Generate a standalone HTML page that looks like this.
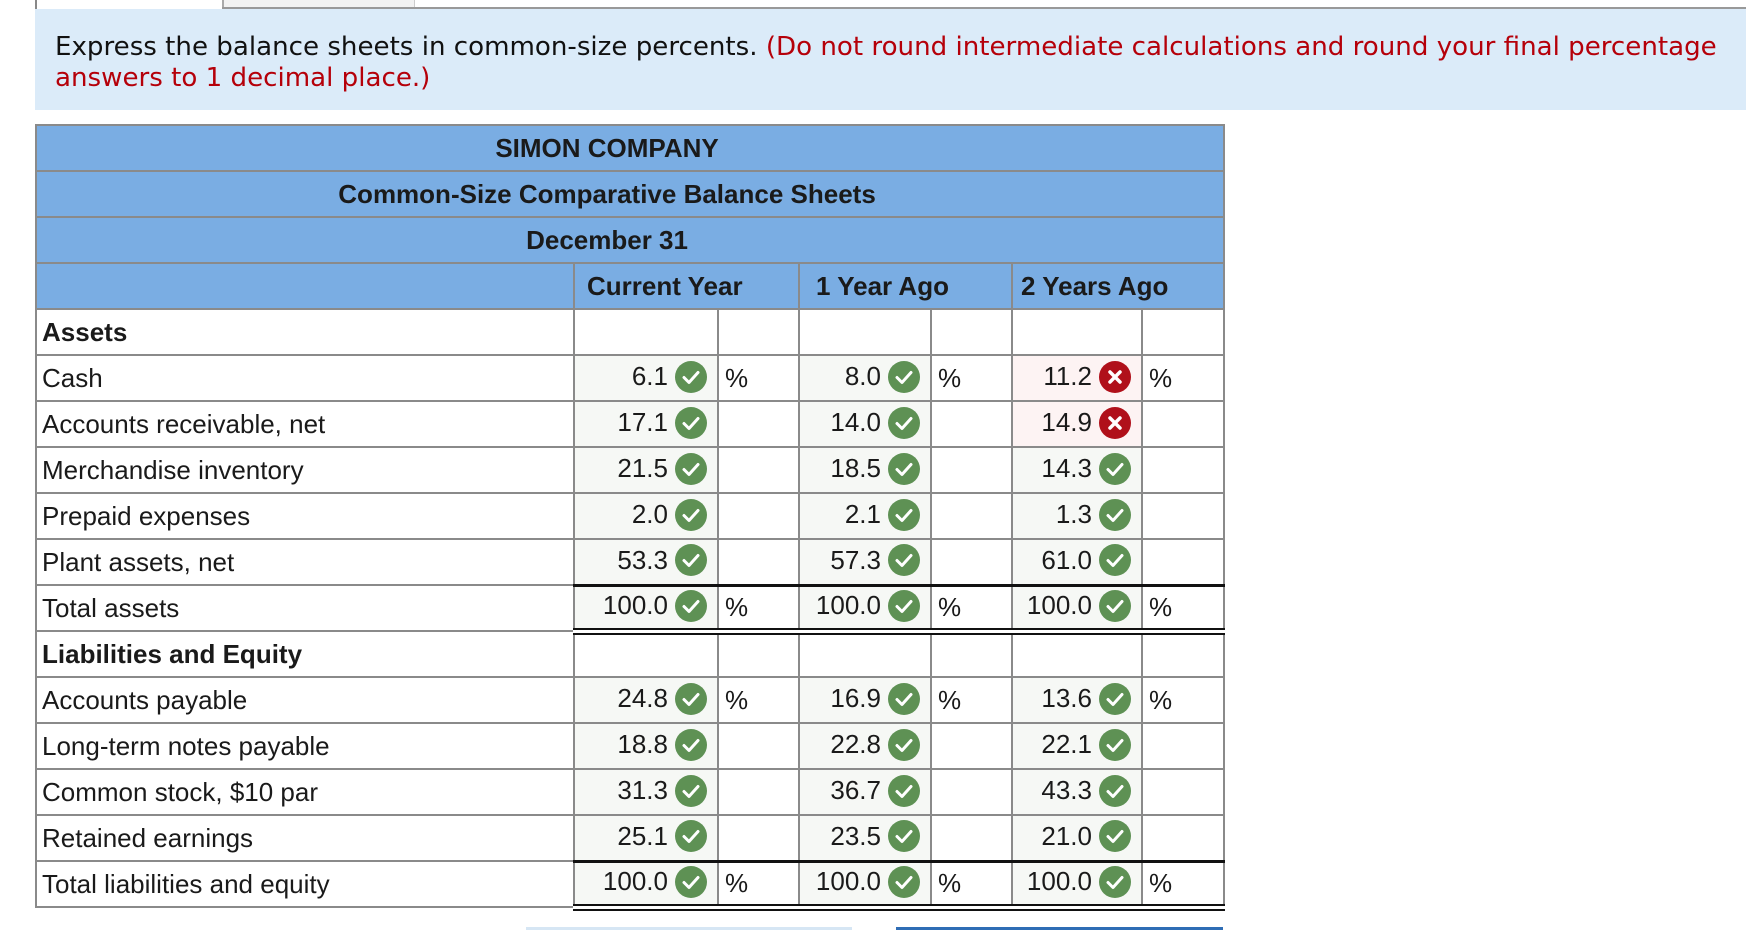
<!DOCTYPE html>
<html><head><meta charset="utf-8"><style>
html,body{margin:0;padding:0;background:#fff;width:1746px;height:930px;overflow:hidden;position:relative}
.tabl{position:absolute;left:35px;top:0;width:2px;height:9px;background:#888}
.tab{position:absolute;left:222px;top:0;width:190px;height:8px;border-left:2px solid #aaa;border-right:1px solid #ccc;background:#f2f2f2}
.tabline{position:absolute;left:222px;top:7px;right:0;height:2px;background:#999}
.instr{position:absolute;left:35px;top:9px;width:1711px;height:101px;background:#dbebf9;font-family:"DejaVu Sans",Verdana,sans-serif;font-size:26.1px;line-height:31px;color:#111;box-sizing:border-box;padding:23px 0 0 20px;white-space:nowrap}
.red{color:#b5000a}
table{position:absolute;left:35px;top:124px;border-collapse:collapse;table-layout:fixed;width:1188px;font-family:"Liberation Sans",Arial,sans-serif;font-size:26px;color:#1a1a1a}
td{border:2px solid #8a8a8a;height:42px;padding:0;box-sizing:border-box;white-space:nowrap;overflow:hidden}
tr{height:46px}
.h td{background:#7aade3;font-weight:bold;text-align:center}
.h td.c{padding-right:46px}
.h td.l{text-align:left;padding-left:12px}
.lab{padding-left:5px}
.b{font-weight:bold}
.v{background:#f6f8f5;text-align:right;padding-right:10px}
.x{background:#fdf3f3}
.p{padding-left:6px}
.ic{display:inline-block;width:32px;height:32px;border-radius:50%;background:#5e9154;vertical-align:middle;margin-left:7px;position:relative;top:-2px}
.ic svg{position:absolute;left:0;top:0}
.ic.r{background:#b0101a}
.t td.tv{border-top:3px solid #111;border-bottom:7px double #111}
.btn1{position:absolute;left:526px;top:927px;width:326px;height:3px;background:#d6e6f4}
.btn2{position:absolute;left:896px;top:927px;width:327px;height:3px;background:#2f6db5}
</style></head><body>
<div class="tabl"></div><div class="tab"></div><div class="tabline"></div>
<div class="instr">Express the balance sheets in common-size percents. <span class="red">(Do not round intermediate calculations and round your final percentage<br>answers to 1 decimal place.)</span></div>
<table>
<colgroup><col style="width:538px"><col style="width:144px"><col style="width:81px"><col style="width:132px"><col style="width:81px"><col style="width:130px"><col style="width:82px"></colgroup>
<tr class="h"><td colspan="7" class="c">SIMON COMPANY</td></tr>
<tr class="h"><td colspan="7" class="c">Common-Size Comparative Balance Sheets</td></tr>
<tr class="h"><td colspan="7" class="c">December 31</td></tr>
<tr class="h"><td></td><td colspan="2" class="l">Current Year</td><td colspan="2" class="l" style="padding-left:16px">1 Year Ago</td><td colspan="2" class="l" style="padding-left:8px">2 Years Ago</td></tr>
<tr><td class="lab b">Assets</td><td></td><td></td><td></td><td></td><td></td><td></td></tr>
<tr><td class="lab">Cash</td><td class="v">6.1<span class="ic"><svg width="32" height="32"><path d="M9 16.5l5 5 9-10" fill="none" stroke="#fff" stroke-width="3" stroke-linecap="round" stroke-linejoin="round"/></svg></span></td><td class="p">%</td><td class="v">8.0<span class="ic"><svg width="32" height="32"><path d="M9 16.5l5 5 9-10" fill="none" stroke="#fff" stroke-width="3" stroke-linecap="round" stroke-linejoin="round"/></svg></span></td><td class="p">%</td><td class="v x">11.2<span class="ic r"><svg width="32" height="32"><path d="M11 11l10 10M21 11l-10 10" fill="none" stroke="#fff" stroke-width="3.5" stroke-linecap="round"/></svg></span></td><td class="p">%</td></tr>
<tr><td class="lab">Accounts receivable, net</td><td class="v">17.1<span class="ic"><svg width="32" height="32"><path d="M9 16.5l5 5 9-10" fill="none" stroke="#fff" stroke-width="3" stroke-linecap="round" stroke-linejoin="round"/></svg></span></td><td></td><td class="v">14.0<span class="ic"><svg width="32" height="32"><path d="M9 16.5l5 5 9-10" fill="none" stroke="#fff" stroke-width="3" stroke-linecap="round" stroke-linejoin="round"/></svg></span></td><td></td><td class="v x">14.9<span class="ic r"><svg width="32" height="32"><path d="M11 11l10 10M21 11l-10 10" fill="none" stroke="#fff" stroke-width="3.5" stroke-linecap="round"/></svg></span></td><td></td></tr>
<tr><td class="lab">Merchandise inventory</td><td class="v">21.5<span class="ic"><svg width="32" height="32"><path d="M9 16.5l5 5 9-10" fill="none" stroke="#fff" stroke-width="3" stroke-linecap="round" stroke-linejoin="round"/></svg></span></td><td></td><td class="v">18.5<span class="ic"><svg width="32" height="32"><path d="M9 16.5l5 5 9-10" fill="none" stroke="#fff" stroke-width="3" stroke-linecap="round" stroke-linejoin="round"/></svg></span></td><td></td><td class="v">14.3<span class="ic"><svg width="32" height="32"><path d="M9 16.5l5 5 9-10" fill="none" stroke="#fff" stroke-width="3" stroke-linecap="round" stroke-linejoin="round"/></svg></span></td><td></td></tr>
<tr><td class="lab">Prepaid expenses</td><td class="v">2.0<span class="ic"><svg width="32" height="32"><path d="M9 16.5l5 5 9-10" fill="none" stroke="#fff" stroke-width="3" stroke-linecap="round" stroke-linejoin="round"/></svg></span></td><td></td><td class="v">2.1<span class="ic"><svg width="32" height="32"><path d="M9 16.5l5 5 9-10" fill="none" stroke="#fff" stroke-width="3" stroke-linecap="round" stroke-linejoin="round"/></svg></span></td><td></td><td class="v">1.3<span class="ic"><svg width="32" height="32"><path d="M9 16.5l5 5 9-10" fill="none" stroke="#fff" stroke-width="3" stroke-linecap="round" stroke-linejoin="round"/></svg></span></td><td></td></tr>
<tr><td class="lab">Plant assets, net</td><td class="v">53.3<span class="ic"><svg width="32" height="32"><path d="M9 16.5l5 5 9-10" fill="none" stroke="#fff" stroke-width="3" stroke-linecap="round" stroke-linejoin="round"/></svg></span></td><td></td><td class="v">57.3<span class="ic"><svg width="32" height="32"><path d="M9 16.5l5 5 9-10" fill="none" stroke="#fff" stroke-width="3" stroke-linecap="round" stroke-linejoin="round"/></svg></span></td><td></td><td class="v">61.0<span class="ic"><svg width="32" height="32"><path d="M9 16.5l5 5 9-10" fill="none" stroke="#fff" stroke-width="3" stroke-linecap="round" stroke-linejoin="round"/></svg></span></td><td></td></tr>
<tr class="t"><td class="lab">Total assets</td><td class="v tv">100.0<span class="ic"><svg width="32" height="32"><path d="M9 16.5l5 5 9-10" fill="none" stroke="#fff" stroke-width="3" stroke-linecap="round" stroke-linejoin="round"/></svg></span></td><td class="p tv">%</td><td class="v tv">100.0<span class="ic"><svg width="32" height="32"><path d="M9 16.5l5 5 9-10" fill="none" stroke="#fff" stroke-width="3" stroke-linecap="round" stroke-linejoin="round"/></svg></span></td><td class="p tv">%</td><td class="v tv">100.0<span class="ic"><svg width="32" height="32"><path d="M9 16.5l5 5 9-10" fill="none" stroke="#fff" stroke-width="3" stroke-linecap="round" stroke-linejoin="round"/></svg></span></td><td class="p tv">%</td></tr>
<tr><td class="lab b">Liabilities and Equity</td><td></td><td></td><td></td><td></td><td></td><td></td></tr>
<tr><td class="lab">Accounts payable</td><td class="v">24.8<span class="ic"><svg width="32" height="32"><path d="M9 16.5l5 5 9-10" fill="none" stroke="#fff" stroke-width="3" stroke-linecap="round" stroke-linejoin="round"/></svg></span></td><td class="p">%</td><td class="v">16.9<span class="ic"><svg width="32" height="32"><path d="M9 16.5l5 5 9-10" fill="none" stroke="#fff" stroke-width="3" stroke-linecap="round" stroke-linejoin="round"/></svg></span></td><td class="p">%</td><td class="v">13.6<span class="ic"><svg width="32" height="32"><path d="M9 16.5l5 5 9-10" fill="none" stroke="#fff" stroke-width="3" stroke-linecap="round" stroke-linejoin="round"/></svg></span></td><td class="p">%</td></tr>
<tr><td class="lab">Long-term notes payable</td><td class="v">18.8<span class="ic"><svg width="32" height="32"><path d="M9 16.5l5 5 9-10" fill="none" stroke="#fff" stroke-width="3" stroke-linecap="round" stroke-linejoin="round"/></svg></span></td><td></td><td class="v">22.8<span class="ic"><svg width="32" height="32"><path d="M9 16.5l5 5 9-10" fill="none" stroke="#fff" stroke-width="3" stroke-linecap="round" stroke-linejoin="round"/></svg></span></td><td></td><td class="v">22.1<span class="ic"><svg width="32" height="32"><path d="M9 16.5l5 5 9-10" fill="none" stroke="#fff" stroke-width="3" stroke-linecap="round" stroke-linejoin="round"/></svg></span></td><td></td></tr>
<tr><td class="lab">Common stock, $10 par</td><td class="v">31.3<span class="ic"><svg width="32" height="32"><path d="M9 16.5l5 5 9-10" fill="none" stroke="#fff" stroke-width="3" stroke-linecap="round" stroke-linejoin="round"/></svg></span></td><td></td><td class="v">36.7<span class="ic"><svg width="32" height="32"><path d="M9 16.5l5 5 9-10" fill="none" stroke="#fff" stroke-width="3" stroke-linecap="round" stroke-linejoin="round"/></svg></span></td><td></td><td class="v">43.3<span class="ic"><svg width="32" height="32"><path d="M9 16.5l5 5 9-10" fill="none" stroke="#fff" stroke-width="3" stroke-linecap="round" stroke-linejoin="round"/></svg></span></td><td></td></tr>
<tr><td class="lab">Retained earnings</td><td class="v">25.1<span class="ic"><svg width="32" height="32"><path d="M9 16.5l5 5 9-10" fill="none" stroke="#fff" stroke-width="3" stroke-linecap="round" stroke-linejoin="round"/></svg></span></td><td></td><td class="v">23.5<span class="ic"><svg width="32" height="32"><path d="M9 16.5l5 5 9-10" fill="none" stroke="#fff" stroke-width="3" stroke-linecap="round" stroke-linejoin="round"/></svg></span></td><td></td><td class="v">21.0<span class="ic"><svg width="32" height="32"><path d="M9 16.5l5 5 9-10" fill="none" stroke="#fff" stroke-width="3" stroke-linecap="round" stroke-linejoin="round"/></svg></span></td><td></td></tr>
<tr class="t"><td class="lab">Total liabilities and equity</td><td class="v tv">100.0<span class="ic"><svg width="32" height="32"><path d="M9 16.5l5 5 9-10" fill="none" stroke="#fff" stroke-width="3" stroke-linecap="round" stroke-linejoin="round"/></svg></span></td><td class="p tv">%</td><td class="v tv">100.0<span class="ic"><svg width="32" height="32"><path d="M9 16.5l5 5 9-10" fill="none" stroke="#fff" stroke-width="3" stroke-linecap="round" stroke-linejoin="round"/></svg></span></td><td class="p tv">%</td><td class="v tv">100.0<span class="ic"><svg width="32" height="32"><path d="M9 16.5l5 5 9-10" fill="none" stroke="#fff" stroke-width="3" stroke-linecap="round" stroke-linejoin="round"/></svg></span></td><td class="p tv">%</td></tr>
</table>
<div class="btn1"></div><div class="btn2"></div>
</body></html>
